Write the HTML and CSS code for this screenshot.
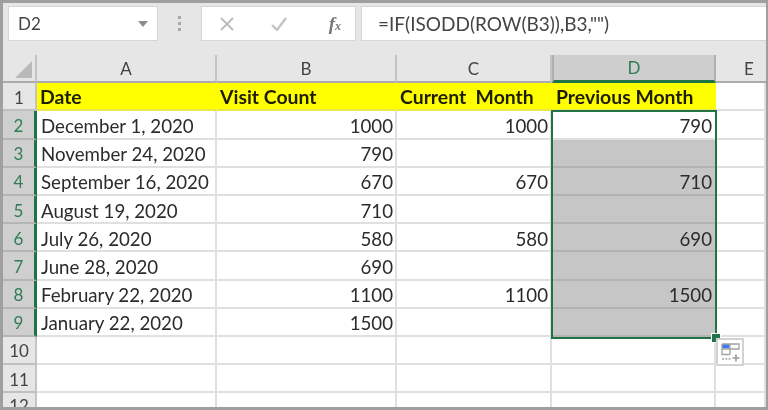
FILE: index.html
```html
<!DOCTYPE html>
<html lang="en">
<head>
<meta charset="utf-8">
<title>Excel sheet</title>
<link rel="stylesheet" href="styles.css">
</head>
<body>
<div class="window">
  <div class="formula-bar">
    <div class="name-box"><span>D2</span><svg class="caret" width="10" height="6" viewBox="0 0 10 6"><path d="M0 0h10L5 6z" fill="#8c8c8c"/></svg></div>
    <div class="grip"><i></i><i></i><i></i></div>
    <div class="fx-box">
      <svg width="14" height="14" viewBox="0 0 14 14"><path d="M1 1l12 12M13 1L1 13" stroke="#bdbdbd" stroke-width="2" fill="none"/></svg>
      <svg width="16" height="14" viewBox="0 0 16 14"><path d="M1 8l5 5L15 1" stroke="#c4c4c4" stroke-width="2.4" fill="none"/></svg>
      <span class="fx">f<small>x</small></span>
    </div>
    <div class="formula">=IF(ISODD(ROW(B3)),B3,"")</div>
  </div>
  <div class="sheet">
    <div class="corner"><svg width="17" height="17" viewBox="0 0 17 17"><path d="M17 0v17H0z" fill="#b9b9b9"/></svg></div>
    <div class="ch">A</div><div class="ch">B</div><div class="ch">C</div><div class="ch ch-sel">D</div><div class="ch ch-e">E</div>

    <div class="rh">1</div><div class="c hd">Date</div><div class="c hd">Visit Count</div><div class="c hd pre">Current  Month</div><div class="c hd hd-d">Previous Month</div><div class="c"></div>
    <div class="rh sel">2</div><div class="c">December 1, 2020</div><div class="c n">1000</div><div class="c n">1000</div><div class="c n d">790</div><div class="c"></div>
    <div class="rh sel">3</div><div class="c">November 24, 2020</div><div class="c n">790</div><div class="c n"></div><div class="c n g"></div><div class="c"></div>
    <div class="rh sel">4</div><div class="c">September 16, 2020</div><div class="c n">670</div><div class="c n">670</div><div class="c n g">710</div><div class="c"></div>
    <div class="rh sel">5</div><div class="c">August 19, 2020</div><div class="c n">710</div><div class="c n"></div><div class="c n g"></div><div class="c"></div>
    <div class="rh sel">6</div><div class="c">July 26, 2020</div><div class="c n">580</div><div class="c n">580</div><div class="c n g">690</div><div class="c"></div>
    <div class="rh sel">7</div><div class="c">June 28, 2020</div><div class="c n">690</div><div class="c n"></div><div class="c n g"></div><div class="c"></div>
    <div class="rh sel">8</div><div class="c">February 22, 2020</div><div class="c n">1100</div><div class="c n">1100</div><div class="c n g">1500</div><div class="c"></div>
    <div class="rh sel">9</div><div class="c">January 22, 2020</div><div class="c n">1500</div><div class="c n"></div><div class="c n g"></div><div class="c"></div>
    <div class="rh">10</div><div class="c"></div><div class="c"></div><div class="c"></div><div class="c"></div><div class="c"></div>
    <div class="rh">11</div><div class="c"></div><div class="c"></div><div class="c"></div><div class="c"></div><div class="c"></div>
    <div class="rh">12</div><div class="c"></div><div class="c"></div><div class="c"></div><div class="c"></div><div class="c"></div>

    <div class="selection">
      <div class="handle"></div>
      <div class="paste">
        <svg width="24" height="24" viewBox="0 0 24 24">
          <rect x="4" y="4" width="7.500" height="4.500" fill="#3d7bf0"/>
          <path d="M4 4h17v5H4M12 4v10.500M4 4v10.500h8M4 9h8" fill="none" stroke="#a3a3a3" stroke-width="1.300"/>
          <path d="M4 19h9" stroke="#a8a8a8" stroke-width="1.300" stroke-dasharray="2 1.300"/>
          <path d="M14.500 18h7M18 14.500v7" stroke="#9a9a9a" stroke-width="1.600"/>
        </svg>
      </div>
    </div>
  </div>
</div>
</body>
</html>
```

FILE: styles.css
```css
* { box-sizing: border-box; }
html, body { margin: 0; padding: 0; }
body { width: 768px; height: 410px; overflow: hidden; background: #fff; }
.window {
  width: 768px;
  height: 410px;
  border: 3px solid #9f9f9f;
  border-right-width: 2px;
  display: flex;
  flex-direction: column;
  overflow: hidden;
  font-family: Lato, "Open Sans", sans-serif;
  color: #2b2b2b;
  filter: blur(0.45px);
}
.formula-bar {
  height: 52px;
  flex: none;
  background: #e6e6e6;
  padding: 3px 0 0 5px;
  display: flex;
  align-items: flex-start;
}
.name-box, .fx-box, .formula {
  height: 35px;
  background: #fff;
  border: 1px solid #d6d6d6;
  display: flex;
  align-items: center;
}
.name-box {
  width: 150px;
  padding: 0 9px 0 9px;
  justify-content: space-between;
  font-size: 17px;
  color: #444;
}
.grip {
  width: 43px;
  height: 35px;
  display: flex;
  flex-direction: column;
  align-items: center;
  justify-content: center;
  gap: 3px;
}
.grip i { width: 3px; height: 3px; background: #a8a8a8; }
.fx-box {
  width: 155px;
  padding: 0 14px 0 18px;
  justify-content: space-between;
}
.fx-box svg:nth-child(2) { margin-left: -4px; }
.fx {
  font-family: "Liberation Serif", serif;
  font-style: italic;
  font-weight: bold;
  font-size: 19px;
  color: #777;
}
.fx small { font-size: 12px; }
.formula {
  margin-left: 5px;
  flex: 1;
  padding-left: 16px;
  font-size: 19px;
  color: #444;
  border-right: none;
}
.sheet {
  position: relative;
  flex: 1;
  min-height: 0;
  display: grid;
  grid-template-columns: 34px 180px 180px 155px 164px 1fr;
  grid-template-rows: repeat(12, 28.200px);
  background: #fff;
}
.corner {
  background: #e6e6e6;
  border-right: 2px solid #c4c4c4;
  border-bottom: 2px solid #ababab;
  display: flex;
  align-items: flex-end;
  justify-content: flex-end;
  padding: 0 3px 3px 0;
}
.ch {
  background: #e6e6e6;
  border-right: 2px solid #c4c4c4;
  border-bottom: 2px solid #ababab;
  display: flex;
  align-items: center;
  justify-content: center;
  font-size: 17px;
  color: #444;
}
.ch-sel { background: #cecece; color: #2f7d55; border-bottom: 3px solid #217346; border-left: 2px solid #b0b0b0; border-right-color: #b0b0b0; }
.ch-e { justify-content: flex-start; padding-left: 28px; border-right: 0; }
.rh {
  background: #e6e6e6;
  border-right: 2px solid #c4c4c4;
  border-bottom: 2px solid #bfbfbf;
  display: flex;
  align-items: center;
  justify-content: center;
  padding-top: 2px;
  font-size: 17px;
  color: #444;
}
.rh.sel { background: #cfcfcf; color: #2f7d55; border-right: 3px solid #217346; border-bottom-color: #b5b5b5; }
.c {
  border-right: 2px solid #e0e0e0;
  border-bottom: 2px solid #e0e0e0;
  display: flex;
  align-items: center;
  padding: 3px 2px 0 4px;
  font-size: 18.700px;
  white-space: pre;
  overflow: visible;
}
.hd { background: #ffff00; font-weight: bold; color: #1d1d00; border-color: #ffff00; font-size: 19.400px; border-bottom-color: #e8e84a; padding: 1px 2px 0 3px; }
.hd-d { padding-left: 4px; border-right: 0; }
.n { justify-content: flex-end; }
.g { background: #c6c6c6; border-right-color: #c6c6c6; border-bottom-color: #b3b3b3; }
.d { border-right-color: transparent; border-bottom-color: #e0e0e0; }
.selection {
  position: absolute;
  top: -1px;
  right: -1px;
  bottom: -2px;
  left: -1px;
  grid-column: 5 / span 1;
  grid-row: 3 / span 8;
  border: 2.500px solid #217346;
  pointer-events: none;
}
.handle {
  position: absolute;
  right: -5px;
  bottom: -5px;
  width: 8px;
  height: 8px;
  background: #217346;
  outline: 1px solid #fff;
}
.paste {
  position: absolute;
  left: calc(100% + 1px);
  top: calc(100% + 1px);
  width: 28px;
  height: 28px;
  background: #fff;
  border: 2px solid #d2d2d2;
  display: flex;
  align-items: center;
  justify-content: center;
}
```
